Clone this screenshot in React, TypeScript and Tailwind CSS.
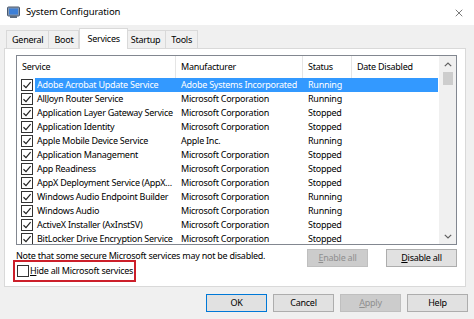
import { X } from 'lucide-react';

type Row = { name: string; maker: string; status: string };

const rows: Row[] = [
  { name: 'Adobe Acrobat Update Service', maker: 'Adobe Systems Incorporated', status: 'Running' },
  { name: 'AllJoyn Router Service', maker: 'Microsoft Corporation', status: 'Running' },
  { name: 'Application Layer Gateway Service', maker: 'Microsoft Corporation', status: 'Stopped' },
  { name: 'Application Identity', maker: 'Microsoft Corporation', status: 'Stopped' },
  { name: 'Apple Mobile Device Service', maker: 'Apple Inc.', status: 'Running' },
  { name: 'Application Management', maker: 'Microsoft Corporation', status: 'Stopped' },
  { name: 'App Readiness', maker: 'Microsoft Corporation', status: 'Stopped' },
  { name: 'AppX Deployment Service (AppX...', maker: 'Microsoft Corporation', status: 'Stopped' },
  { name: 'Windows Audio Endpoint Builder', maker: 'Microsoft Corporation', status: 'Running' },
  { name: 'Windows Audio', maker: 'Microsoft Corporation', status: 'Running' },
  { name: 'ActiveX Installer (AxInstSV)', maker: 'Microsoft Corporation', status: 'Stopped' },
  { name: 'BitLocker Drive Encryption Service', maker: 'Microsoft Corporation', status: 'Stopped' },
];

function CheckBox({ checked }: { checked: boolean }) {
  return (
    <svg width="12" height="12" viewBox="0 0 12 12" className="shrink-0">
      <rect x="0.5" y="0.5" width="11" height="11" fill="#fff" stroke="#333" />
      {checked && <path d="M2.5 6.2 L5 8.6 L9.6 3.2" fill="none" stroke="#222" strokeWidth="1.2" />}
    </svg>
  );
}

function AppIcon() {
  return (
    <svg width="13" height="13" viewBox="0 0 13 13">
      <rect x="0.5" y="1" width="12" height="9" rx="1" fill="#8a9bb0" stroke="#4a5a70" />
      <rect x="2" y="2.5" width="9" height="6" fill="#3d7fd6" />
      <rect x="3" y="10" width="7" height="2" fill="#5d6b7d" />
    </svg>
  );
}

function Tab({ label, active }: { label: string; active?: boolean }) {
  if (active) {
    return (
      <div className="h-[21px] px-[7px] flex items-center bg-white border border-b-0 border-[#d9d9d9] -mx-[2px] relative z-10 mb-[-1px]">
        {label}
      </div>
    );
  }
  return (
    <div className="h-[18px] px-[5px] flex items-center bg-[#f0f0f0] border border-b-0 border-[#d9d9d9] -ml-px first:ml-0">
      {label}
    </div>
  );
}

function Btn({ label, u, disabled, focused }: { label: string; u?: number; disabled?: boolean; focused?: boolean }) {
  const text =
    u === undefined ? (
      label
    ) : (
      <>
        {label.slice(0, u)}
        <span className="underline">{label[u]}</span>
        {label.slice(u + 1)}
      </>
    );
  return (
    <div
      className={
        'w-[61px] h-[18px] flex items-center justify-center border ' +
        (disabled
          ? 'bg-[#cccccc] border-[#bfbfbf] text-[#8f8f8f]'
          : focused
          ? 'bg-[#e1e1e1] border-[#0078d7] text-black'
          : 'bg-[#e1e1e1] border-[#adadad] text-black')
      }
    >
      {text}
    </div>
  );
}

export default function App() {
  return (
    <div
      className="w-[474px] h-[319px] bg-[#f0f0f0] flex flex-col overflow-hidden text-[9px] text-black tracking-[-0.25px]"
      style={{ fontFamily: '"Noto Sans", "Open Sans", sans-serif' }}
    >
      {/* Title bar */}
      <div className="h-[25px] bg-white flex items-center pl-[7px] pr-[9px] shrink-0">
        <AppIcon />
        <span className="ml-[6px] text-[9.5px] tracking-[-0.1px]">System Configuration</span>
        <X className="ml-auto w-[12px] h-[12px] text-[#222]" strokeWidth={1.2} />
      </div>

      {/* Tabs */}
      <div className="h-[23px] flex items-end pl-[6px] shrink-0">
        <Tab label="General" />
        <Tab label="Boot" />
        <div className="w-[2px]" />
        <Tab label="Services" active />
        <Tab label="Startup" />
        <Tab label="Tools" />
      </div>

      {/* Panel */}
      <div className="mx-[4px] w-[462px] h-[239px] bg-white border border-[#d9d9d9] shrink-0 pl-[11px] pt-[6px] flex flex-col">
        {/* List box */}
        <div className="w-[441px] h-[190px] border border-[#828790] flex overflow-hidden">
          <div className="flex-1 flex flex-col overflow-hidden">
            <div className="h-[22px] flex items-center shrink-0">
              <div className="w-[159px] pl-[5px] h-full flex items-center border-r border-[#e5e5e5]">Service</div>
              <div className="w-[127px] pl-[5px] h-full flex items-center border-r border-[#e5e5e5]">Manufacturer</div>
              <div className="w-[49px] pl-[5px] h-full flex items-center border-r border-[#e5e5e5]">Status</div>
              <div className="w-[87px] pl-[5px] h-full flex items-center">Date Disabled</div>
            </div>
            {rows.map((r, i) => (
              <div key={r.name} className="h-[14px] flex items-center shrink-0">
                <div className="w-[18px] pl-[4px] flex items-center">
                  <CheckBox checked />
                </div>
                <div
                  className={
                    'flex items-center h-full w-[403px] ' + (i === 0 ? 'bg-[#3399ff] text-white' : '')
                  }
                >
                  <div className="w-[141px] pl-[2px] whitespace-nowrap overflow-hidden">{r.name}</div>
                  <div className="w-[127px] pl-[5px] whitespace-nowrap overflow-hidden">{r.maker}</div>
                  <div className="w-[49px] pl-[5px]">{r.status}</div>
                </div>
              </div>
            ))}
          </div>
          {/* Scrollbar */}
          <div className="w-[17px] bg-[#f0f0f0] flex flex-col items-center shrink-0">
            <div className="h-[16px] flex items-center justify-center">
              <svg width="8" height="5" viewBox="0 0 8 5">
                <path d="M0.8 4.2 L4 1 L7.2 4.2" fill="none" stroke="#606060" strokeWidth="1.2" />
              </svg>
            </div>
            <div className="w-[10px] h-[13px] bg-[#cdcdcd]" />
            <div className="flex-1" />
            <div className="h-[16px] flex items-center justify-center">
              <svg width="8" height="5" viewBox="0 0 8 5">
                <path d="M0.8 0.8 L4 4 L7.2 0.8" fill="none" stroke="#606060" strokeWidth="1.2" />
              </svg>
            </div>
          </div>
        </div>

        {/* Note + buttons */}
        <div className="flex items-start mt-[4px] w-[441px]">
          <div className="pt-0">Note that some secure Microsoft services may not be disabled.</div>
          <div className="ml-auto flex gap-[18px]">
            <Btn label="Enable all" u={0} disabled />
            <div className="w-[71px] h-[18px] flex items-center justify-center border bg-[#e1e1e1] border-[#adadad]">
              <span className="underline">D</span>isable all
            </div>
          </div>
        </div>

        {/* Hide checkbox */}
        <div className="-ml-[3px] -mt-[7px] w-[123px] h-[22px] border-2 border-[#cc1f2a] flex items-center pl-[2px] gap-[1px] whitespace-nowrap">
          <CheckBox checked={false} />
          <span>
            <span className="underline">H</span>ide all Microsoft services
          </span>
        </div>
      </div>

      {/* Bottom buttons */}
      <div className="flex justify-end gap-[6px] pr-[6px] pt-[7px]">
        <Btn label="OK" focused />
        <Btn label="Cancel" />
        <Btn label="Apply" u={0} disabled />
        <Btn label="Help" />
      </div>
    </div>
  );
}
